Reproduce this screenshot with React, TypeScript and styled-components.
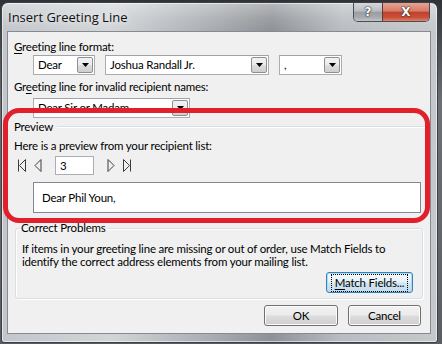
import React from "react";
import styled, { createGlobalStyle } from "styled-components";

const Global = createGlobalStyle`
  html, body {
    margin: 0;
    padding: 0;
    width: 442px;
    height: 344px;
    overflow: hidden;
    background: #55595e;
  }
  * { box-sizing: border-box; }
`;

const UI_FONT = `Lato, "Open Sans", "Liberation Sans", sans-serif`;

const Desktop = styled.div`
  position: relative;
  width: 442px;
  height: 344px;
  padding: 2px 4px 0 1px;
  background: linear-gradient(180deg, #2f3236 0%, #6c7075 30%, #5a5e63 100%);
  font-family: ${UI_FONT};
  font-size: 11.5px;
  letter-spacing: -0.2px;
  color: #000;
`;

const Window = styled.div`
  display: flex;
  flex-direction: column;
  height: 341px;
  border: 1px solid #3d4147;
  border-radius: 7px 7px 3px 3px;
  background: linear-gradient(90deg, #c2c6ca 0%, #d2d5d8 25%, #a9acb0 48%, #8e9195 62%, #b9bcc0 78%, #c6c9cc 100%);
  box-shadow: inset 0 0 0 1px rgba(255, 255, 255, 0.55);
  overflow: hidden;
`;

const TitleBar = styled.div`
  display: flex;
  align-items: center;
  height: 28px;
  padding-left: 6px;
  background: linear-gradient(180deg, rgba(255,255,255,0.35) 0%, rgba(255,255,255,0.1) 60%, rgba(255,255,255,0) 100%);
`;

const Title = styled.span`
  flex: 1;
  font-family: "Open Sans", sans-serif;
  font-size: 13px;
  letter-spacing: 0;
  color: #111;
  text-shadow: 0 0 6px rgba(255, 255, 255, 0.9);
`;

const CaptionButtons = styled.div`
  align-self: flex-start;
  display: flex;
  height: 19px;
  margin-right: 7px;
  border: 1px solid #4a4e54;
  border-top: none;
  border-radius: 0 0 5px 5px;
  overflow: hidden;
`;

const CaptionButton = styled.div<{ $close?: boolean }>`
  display: flex;
  align-items: center;
  justify-content: center;
  width: ${(p) => (p.$close ? "47px" : "28px")};
  height: 100%;
  font-family: "DejaVu Sans", sans-serif;
  font-weight: bold;
  font-size: 12px;
  letter-spacing: 0;
  color: #fff;
  text-shadow: 0 0 2px #222, 0 0 1px #000;
  border-left: ${(p) => (p.$close ? "1px solid #5a3a36" : "none")};
  background: ${(p) =>
    p.$close
      ? "linear-gradient(180deg, #e5a493 0%, #d77a66 45%, #c2412c 52%, #c8503a 80%, #e0846a 100%)"
      : "linear-gradient(180deg, #d6d9dc 0%, #b7bbbf 45%, #9a9ea3 52%, #a7abaf 80%, #c2c5c8 100%)"};
`;

const Client = styled.div`
  flex: 1;
  margin: 0 6px 8px 5px;
  padding: 7px 0 0 6px;
  border: 1px solid #878b91;
  background: #f0f0f0;
  display: flex;
  flex-direction: column;
`;

const Label = styled.div<{ $gap?: number }>`
  height: 16px;
  line-height: 16px;
  margin-top: ${(p) => p.$gap ?? 0}px;
  white-space: nowrap;
`;

const Key = styled.span`
  text-decoration: underline;
  text-underline-offset: 2px;
`;

const ComboRow = styled.div<{ $gap?: number }>`
  display: flex;
  gap: 10px;
  margin: ${(p) => p.$gap ?? 0}px 0 0 19px;
`;

const ComboBox = styled.div<{ $w: number }>`
  display: flex;
  align-items: center;
  width: ${(p) => p.$w}px;
  height: 20px;
  padding: 1px;
  border: 1px solid #abadb3;
  border-top-color: #a0a2a8;
  background: #fff;
`;

const ComboText = styled.span`
  flex: 1;
  padding-left: 3px;
  line-height: 16px;
  white-space: nowrap;
  overflow: hidden;
`;

const ComboArrow = styled.div`
  display: flex;
  align-items: center;
  justify-content: center;
  width: 16px;
  height: 16px;
  border: 1px solid #8e8f8f;
  border-radius: 2px;
  background: linear-gradient(180deg, #f2f2f2 0%, #ebebeb 48%, #dddddd 52%, #cfcfcf 100%);
`;

const PreviewHeader = styled.div`
  display: flex;
  align-items: center;
  height: 16px;
  margin-right: 5px;
  gap: 4px;
`;

const HeaderLine = styled.div`
  flex: 1;
  height: 2px;
  margin-top: 1px;
  border-top: 1px solid #d5dfe5;
  border-bottom: 1px solid #fff;
`;

const NavRow = styled.div`
  display: flex;
  align-items: center;
  height: 19px;
  margin: 2px 0 0 3px;
`;

const NavIcon = styled.svg<{ $ml?: number }>`
  display: block;
  margin-left: ${(p) => p.$ml ?? 0}px;
`;

const RecordBox = styled.div`
  width: 39px;
  height: 19px;
  margin-left: 13px;
  padding-left: 4px;
  line-height: 17px;
  border: 1px solid #abadb3;
  background: #fff;
`;

const PreviewBox = styled.div`
  display: flex;
  align-items: center;
  width: 388px;
  height: 31px;
  margin: 7px 0 0 19px;
  padding-left: 8px;
  border: 1px solid #828790;
  background: #fff;
`;

const Group = styled.fieldset`
  width: 408px;
  margin: 7px 0 0 1px;
  padding: 0 9px 5px 6px;
  border: 1px solid #d5dfe5;
  border-radius: 3px;
  box-shadow: inset 1px 1px 0 #fff, 1px 1px 0 #fff;
`;

const Legend = styled.legend`
  height: 16px;
  line-height: 16px;
  padding: 0 1px;
  margin-left: -2px;
`;

const Help = styled.p`
  margin: 6px 0 0;
  line-height: 13px;
  white-space: nowrap;
`;

const GroupActions = styled.div`
  display: flex;
  justify-content: flex-end;
  margin-top: 4px;
`;

const Button = styled.div<{ $w: number; $focus?: boolean }>`
  display: flex;
  align-items: center;
  justify-content: center;
  width: ${(p) => p.$w}px;
  height: 21px;
  border: 1px solid ${(p) => (p.$focus ? "#3c7fb1" : "#707070")};
  border-radius: 3px;
  background: ${(p) =>
    p.$focus
      ? "linear-gradient(180deg, #f4f9fc 0%, #e6f1f8 48%, #d2e6f2 52%, #c3dcec 100%)"
      : "linear-gradient(180deg, #f2f2f2 0%, #ebebeb 48%, #dddddd 52%, #cfcfcf 100%)"};
  box-shadow: inset 0 0 0 1px ${(p) => (p.$focus ? "#a6dff9" : "#fcfcfc")};
  white-space: nowrap;
`;

const FocusRing = styled.span`
  padding: 0 2px;
  outline: 1px dotted #000;
  outline-offset: 1px;
  line-height: 14px;
`;

const Footer = styled.div`
  display: flex;
  justify-content: flex-end;
  gap: 10px;
  margin: 6px 9px 0 0;
`;

const Annotation = styled.div`
  position: absolute;
  left: 3px;
  top: 108px;
  width: 427px;
  height: 115px;
  border: 5px solid #e2202b;
  border-radius: 16px;
  pointer-events: none;
`;

const DownArrow = () => (
  <svg width="7" height="4" viewBox="0 0 7 4">
    <polygon points="0,0 7,0 3.5,4" fill="#000" />
  </svg>
);

const Combo = ({ w, text }: { w: number; text: string }) => (
  <ComboBox $w={w}>
    <ComboText>{text}</ComboText>
    <ComboArrow>
      <DownArrow />
    </ComboArrow>
  </ComboBox>
);

const First = () => (
  <NavIcon width="9" height="13" viewBox="0 0 9 13">
    <path d="M1.5 0.5v12" stroke="#3c3c3c" fill="none" />
    <path d="M8.5 0.5 L2.5 6.5 L8.5 12.5 Z" stroke="#3c3c3c" fill="none" />
  </NavIcon>
);

const Prev = ({ ml }: { ml: number }) => (
  <NavIcon $ml={ml} width="8" height="13" viewBox="0 0 8 13">
    <path d="M7 0.5 L1 6.5 L7 12.5 Z" stroke="#3c3c3c" fill="none" />
  </NavIcon>
);

const Next = ({ ml }: { ml: number }) => (
  <NavIcon $ml={ml} width="8" height="13" viewBox="0 0 8 13">
    <path d="M1 0.5 L7 6.5 L1 12.5 Z" stroke="#3c3c3c" fill="none" />
  </NavIcon>
);

const Last = ({ ml }: { ml: number }) => (
  <NavIcon $ml={ml} width="9" height="13" viewBox="0 0 9 13">
    <path d="M0.5 0.5 L6.5 6.5 L0.5 12.5 Z" stroke="#3c3c3c" fill="none" />
    <path d="M7.5 0.5v12" stroke="#3c3c3c" fill="none" />
  </NavIcon>
);

export default function App() {
  return (
    <Desktop>
      <Global />
      <Window>
        <TitleBar>
          <Title>Insert Greeting Line</Title>
          <CaptionButtons>
            <CaptionButton>?</CaptionButton>
            <CaptionButton $close>X</CaptionButton>
          </CaptionButtons>
        </TitleBar>
        <Client>
          <Label>
            <Key>G</Key>reeting line format:
          </Label>
          <ComboRow>
            <Combo w={62} text="Dear" />
            <Combo w={164} text="Joshua Randall Jr." />
            <Combo w={63} text="," />
          </ComboRow>
          <Label $gap={4}>
            Gr<Key>e</Key>eting line for invalid recipient names:
          </Label>
          <ComboRow $gap={3}>
            <Combo w={157} text="Dear Sir or Madam" />
          </ComboRow>
          <PreviewHeader>
            <span>Preview</span>
            <HeaderLine />
          </PreviewHeader>
          <Label $gap={4}>Here is a preview from your recipient list:</Label>
          <NavRow>
            <First />
            <Prev ml={8} />
            <RecordBox>3</RecordBox>
            <Next ml={13} />
            <Last ml={8} />
          </NavRow>
          <PreviewBox>Dear Phil Youn,</PreviewBox>
          <Group>
            <Legend>Correct Problems</Legend>
            <Help>
              If items in your greeting line are missing or out of order, use Match Fields to
              <br />
              identify the correct address elements from your mailing list.
            </Help>
            <GroupActions>
              <Button $w={87} $focus>
                <FocusRing>
                  <Key>M</Key>atch Fields...
                </FocusRing>
              </Button>
            </GroupActions>
          </Group>
          <Footer>
            <Button $w={74}>OK</Button>
            <Button $w={73}>Cancel</Button>
          </Footer>
        </Client>
      </Window>
      <Annotation />
    </Desktop>
  );
}
